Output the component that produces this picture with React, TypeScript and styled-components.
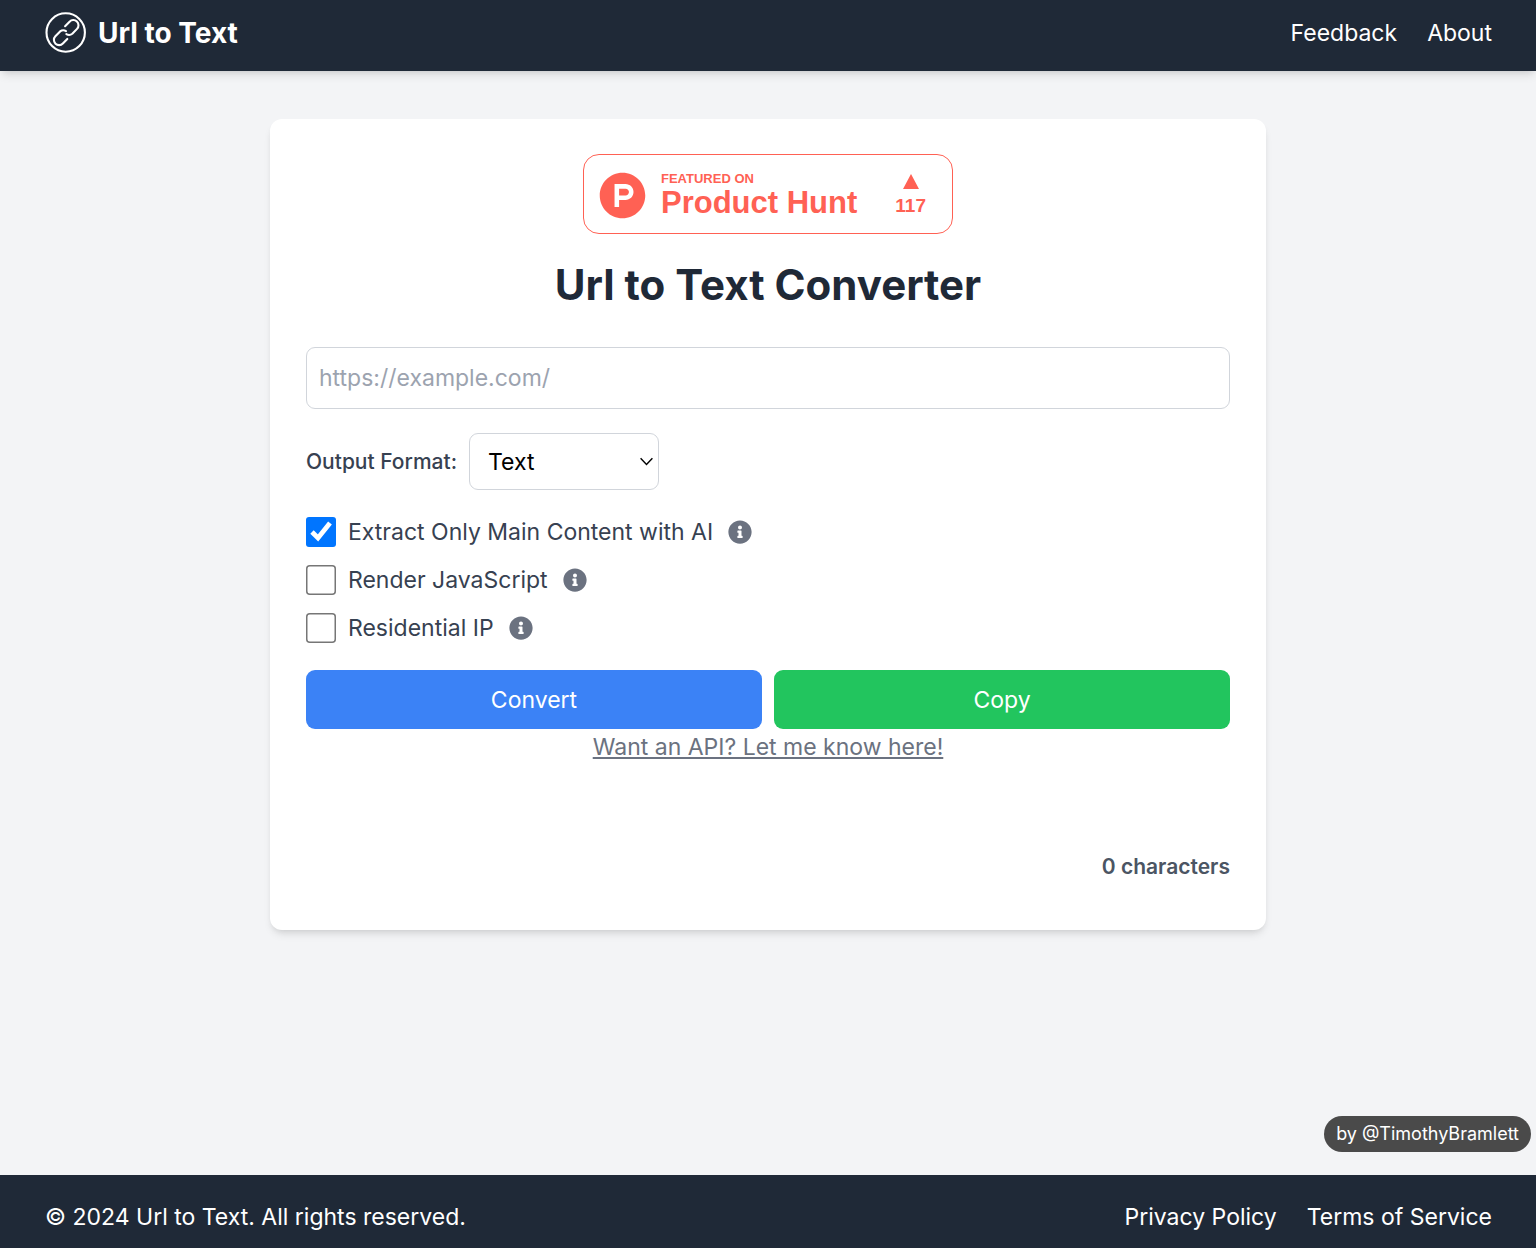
import React, { useState } from "react";
import styled, { createGlobalStyle } from "styled-components";
import { FaInfoCircle, FaProductHunt } from "react-icons/fa";

const GlobalStyle = createGlobalStyle`
  *, *::before, *::after { box-sizing: border-box; }
  body {
    margin: 0;
    background: #f3f4f6;
    color: #374151;
    font-family: Inter, "Liberation Sans", sans-serif;
    font-size: 23px;
    line-height: 36px;
  }
  h1, p, form { margin: 0; }
  input, select, button { font: inherit; }
`;

const Page = styled.div`
  display: flex;
  flex-direction: column;
  min-height: 100vh;
`;

const Header = styled.header`
  display: flex;
  align-items: center;
  justify-content: space-between;
  padding: 12px 44px 18px 45px;
  background: #1f2937;
  color: #fff;
  box-shadow: 0 6px 9px -2px rgba(0, 0, 0, 0.1), 0 3px 6px -3px rgba(0, 0, 0, 0.1);
`;

const Brand = styled.a`
  display: flex;
  align-items: center;
  gap: 12px;
  color: inherit;
  font-size: 28px;
  font-weight: 700;
  text-decoration: none;
`;

const LinkRow = styled.nav`
  display: flex;
  gap: 30px;
`;

const BarLink = styled.a`
  color: inherit;
  text-decoration: none;
`;

const Main = styled.main`
  flex: 1;
  display: flex;
  justify-content: center;
  align-items: flex-start;
  padding: 48px 24px;
`;

const Card = styled.section`
  width: 100%;
  max-width: 996px;
  display: flex;
  flex-direction: column;
  padding: 35px 36px 48px;
  border-radius: 12px;
  background: #fff;
  box-shadow: 0 6px 9px -2px rgba(0, 0, 0, 0.1), 0 3px 6px -3px rgba(0, 0, 0, 0.1);
`;

const HuntBadge = styled.a`
  align-self: center;
  display: flex;
  align-items: center;
  width: 370px;
  height: 80px;
  padding: 2px 26px 0 15px;
  border: 1px solid #ff6154;
  border-radius: 16px;
  color: #ff6154;
  font-family: "Liberation Sans", Arial, sans-serif;
  font-weight: 700;
  text-decoration: none;
`;

const HuntText = styled.span`
  display: flex;
  flex-direction: column;
  flex: 1;
  padding-left: 15px;
`;

const HuntLabel = styled.span`
  font-size: 13px;
  line-height: 16px;
`;

const HuntName = styled.span`
  font-size: 31px;
  line-height: 32px;
`;

const HuntVotes = styled.span`
  display: flex;
  flex-direction: column;
  align-items: center;
  gap: 6px;
  font-size: 19px;
  line-height: 22px;
`;

const Title = styled.h1`
  padding: 24px 0 35px;
  color: #1f2937;
  font-size: 42px;
  font-weight: 700;
  line-height: 54px;
  text-align: center;
`;

const Form = styled.form`
  display: flex;
  flex-direction: column;
  gap: 24px;
`;

const UrlInput = styled.input`
  width: 100%;
  height: 62px;
  padding: 0 12px;
  border: 1px solid #d1d5db;
  border-radius: 9px;
  background: #fff;
  color: #000;
  &::placeholder { color: #9ca3af; opacity: 1; }
`;

const FormatRow = styled.div`
  display: flex;
  align-items: center;
  gap: 12px;
`;

const FormatLabel = styled.label`
  font-size: 21px;
  font-weight: 500;
`;

const SelectBox = styled.div`
  display: grid;
  align-items: center;
  > * { grid-area: 1 / 1; }
  > svg { justify-self: end; margin-right: 6px; pointer-events: none; }
`;

const Select = styled.select`
  appearance: none;
  width: 190px;
  height: 57px;
  padding: 0 18px;
  border: 1px solid #d1d5db;
  border-radius: 9px;
  background: #fff;
  color: #000;
`;

const Options = styled.div`
  display: flex;
  flex-direction: column;
  gap: 12px;
`;

const OptionRow = styled.div`
  display: flex;
  align-items: center;
  gap: 15px;
  color: #6b7280;
`;

const OptionLabel = styled.label`
  display: flex;
  align-items: center;
  gap: 12px;
  color: #374151;
`;

const Checkbox = styled.input`
  zoom: 150%;
  width: 20px;
  height: 20px;
  margin: 0;
`;

const Actions = styled.div`
  display: grid;
  grid-template-columns: 1fr 1fr;
  gap: 12px;
`;

const ActionButton = styled.button<{ $color: string }>`
  height: 59px;
  padding: 0;
  border: 0;
  border-radius: 9px;
  background: ${(p) => p.$color};
  color: #fff;
`;

const ApiLink = styled.a`
  align-self: center;
  color: #6b7280;
`;

const Counter = styled.p`
  padding-top: 87px;
  color: #4b5563;
  font-size: 21px;
  font-weight: 600;
  line-height: 30px;
  text-align: right;
`;

const AuthorPill = styled.a`
  position: fixed;
  right: 5px;
  bottom: 96px;
  padding: 0 12px;
  border-radius: 18px;
  background: #4a4a4a;
  color: #fff;
  font-size: 18px;
  text-decoration: none;
`;

const Footer = styled.footer`
  display: flex;
  justify-content: space-between;
  padding: 24px 44px 13px 45px;
  background: #1f2937;
  color: #fff;
`;

function LogoMark() {
  const link = "M3.8-5.2H10.2a5.2 5.2 0 0 1 5.2 5.2a5.2 5.2 0 0 1-5.2 5.2H3.4a5.2 5.2 0 0 1-4.4-4";
  return (
    <svg width="41" height="41" viewBox="0 0 41 41" fill="none" stroke="#fff" strokeWidth="2.1" aria-hidden="true">
      <circle cx="20.7" cy="20.5" r="19.2" />
      <g strokeLinecap="round" strokeLinejoin="round" transform="translate(21.2 20.6) rotate(-46)">
        <path d={link} />
        <path d={link} transform="rotate(180)" />
      </g>
    </svg>
  );
}

const settings = [
  { id: "extract", label: "Extract Only Main Content with AI", on: true },
  { id: "render", label: "Render JavaScript", on: false },
  { id: "residential", label: "Residential IP", on: false },
];

export default function App() {
  const [url, setUrl] = useState("");
  return (
    <>
      <GlobalStyle />
      <Page>
        <Header>
          <Brand href="#"><LogoMark />Url to Text</Brand>
          <LinkRow>
            <BarLink href="#feedback">Feedback</BarLink>
            <BarLink href="#about">About</BarLink>
          </LinkRow>
        </Header>
        <Main>
          <Card>
            <HuntBadge href="#product-hunt">
              <FaProductHunt size={47} aria-hidden="true" />
              <HuntText>
                <HuntLabel>FEATURED ON</HuntLabel>
                <HuntName>Product Hunt</HuntName>
              </HuntText>
              <HuntVotes>
                <svg width="16" height="15" viewBox="0 0 16 15" aria-hidden="true"><path d="M8 0 16 15H0Z" fill="#ff6154" /></svg>
                117
              </HuntVotes>
            </HuntBadge>
            <Title>Url to Text Converter</Title>
            <Form onSubmit={(e) => e.preventDefault()}>
              <UrlInput type="url" aria-label="URL" placeholder="https://example.com/" value={url} onChange={(e) => setUrl(e.target.value)} />
              <FormatRow>
                <FormatLabel htmlFor="format">Output Format:</FormatLabel>
                <SelectBox>
                  <Select id="format">
                    <option>Text</option>
                  </Select>
                  <svg width="13" height="9" viewBox="0 0 13 9" fill="none" stroke="#000" strokeWidth="1.4" aria-hidden="true"><path d="M.6 1.2 6.5 7.4 12.4 1.2" /></svg>
                </SelectBox>
              </FormatRow>
              <Options>
                {settings.map((s) => (
                  <OptionRow key={s.id}>
                    <OptionLabel htmlFor={s.id}>
                      <Checkbox type="checkbox" id={s.id} defaultChecked={s.on} />
                      {s.label}
                    </OptionLabel>
                    <FaInfoCircle size={24} aria-hidden="true" />
                  </OptionRow>
                ))}
              </Options>
              <Actions>
                <ActionButton type="submit" $color="#3b82f6">Convert</ActionButton>
                <ActionButton type="button" $color="#22c55e">Copy</ActionButton>
              </Actions>
            </Form>
            <ApiLink href="#api">Want an API? Let me know here!</ApiLink>
            <Counter>0 characters</Counter>
          </Card>
        </Main>
        <Footer>
          <span>© 2024 Url to Text. All rights reserved.</span>
          <LinkRow>
            <BarLink href="#privacy">Privacy Policy</BarLink>
            <BarLink href="#terms">Terms of Service</BarLink>
          </LinkRow>
        </Footer>
        <AuthorPill href="#author">by @TimothyBramlett</AuthorPill>
      </Page>
    </>
  );
}
